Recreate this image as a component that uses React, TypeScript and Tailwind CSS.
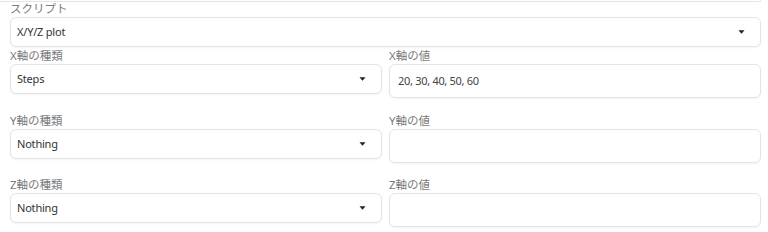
import React from "react";

const font = { fontFamily: '"Noto Sans", "Noto Sans CJK JP", sans-serif' };

function Caret() {
  return (
    <svg width="7" height="4" viewBox="0 0 7 4" className="shrink-0">
      <path d="M0.5 0.3 L6.5 0.3 L3.5 3.8 Z" fill="#222" />
    </svg>
  );
}

function Dropdown({ value }: { value: string }) {
  return (
    <div className="flex items-center justify-between h-[30px] pl-[6px] pr-[15px] bg-white border border-[#e4e4e4] rounded-[6px] shadow-[0_1px_2px_rgba(0,0,0,0.05)]">
      <span className="text-[11px] tracking-[-0.2px] text-[#333]">{value}</span>
      <Caret />
    </div>
  );
}

function TextBox({ value }: { value?: string }) {
  return (
    <div className="flex items-center h-[34px] px-[8px] bg-white border border-[#e4e4e4] rounded-[6px] shadow-[0_1px_2px_rgba(0,0,0,0.05)]">
      <span className="text-[11px] tracking-[-0.3px] text-[#444]">{value}</span>
    </div>
  );
}

function Label({ text }: { text: string }) {
  return <div className="h-[16px] leading-[16px] text-[11.5px] text-[#7a7a7a]">{text}</div>;
}

export default function App() {
  const rows = [
    { axis: "X", type: "Steps", value: "20, 30, 40, 50, 60" },
    { axis: "Y", type: "Nothing", value: "" },
    { axis: "Z", type: "Nothing", value: "" },
  ];

  return (
    <div className="w-[768px] h-[232px] bg-white pl-[10px] pr-[7px] overflow-hidden" style={font}>
      {/* bottom edge of the panel above */}
      <div className="-ml-[10px] h-[2px] border-b border-r border-[#e4e4e4] rounded-br-[6px]" />

      <div className="-mt-[1px]">
        <Label text="スクリプト" />
        <Dropdown value="X/Y/Z plot" />
      </div>

      <div className="flex flex-col">
        {rows.map((row, i) => (
          <div
            key={row.axis}
            className={`grid grid-cols-2 gap-x-[7px] ${i === 0 ? "mt-[1px]" : i === 1 ? "mt-[15px]" : "mt-[14px]"}`}
          >
            <div>
              <Label text={`${row.axis}軸の種類`} />
              <Dropdown value={row.type} />
            </div>
            <div>
              <Label text={`${row.axis}軸の値`} />
              <TextBox value={row.value} />
            </div>
          </div>
        ))}
      </div>
    </div>
  );
}
